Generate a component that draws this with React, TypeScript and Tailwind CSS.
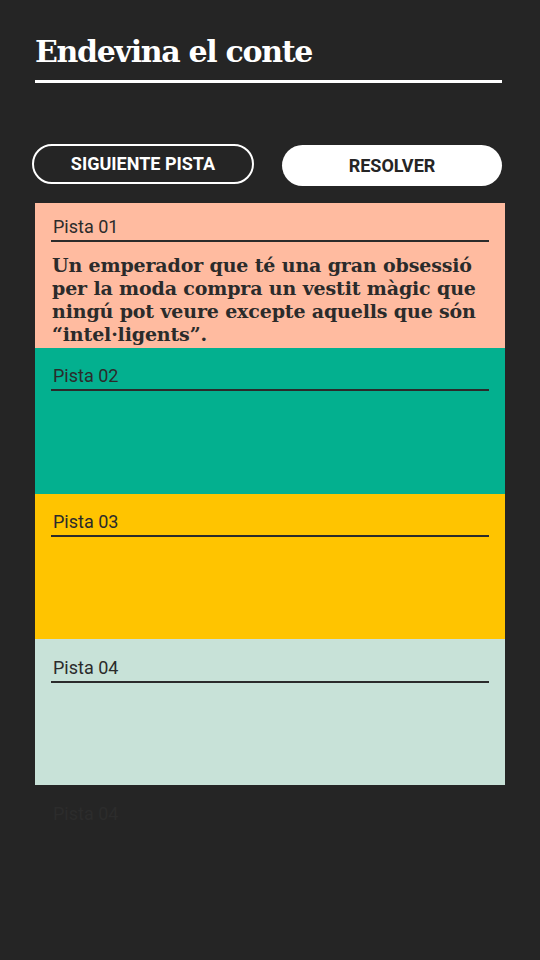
import React from "react";

const slab = { fontFamily: '"DejaVu Serif", "Liberation Serif", serif' };
const roboto = { fontFamily: 'Roboto, "Liberation Sans", sans-serif' };

function Card({
  bg,
  label,
  top,
  children,
}: {
  bg: string;
  label: string;
  top: string;
  children?: React.ReactNode;
}) {
  return (
    <div className={`h-[145.5px] overflow-hidden px-[16px] ${bg} ${top}`}>
      <div
        className="text-[18px] leading-[21px] text-[#2b2b2b] px-[2px] pb-[2.5px] border-b-2 border-[#2b2b2b]"
        style={roboto}
      >
        {label}
      </div>
      {children}
    </div>
  );
}

export default function App() {
  return (
    <div className="min-h-[960px] w-[540px] bg-[#252525]">
      <div className="px-[35px] pt-[32px]">
        <h1
          className="text-[30px] leading-[40px] font-bold text-white tracking-[-1.3px]"
          style={slab}
        >
          Endevina el conte
        </h1>
        <div className="mt-[7.5px] h-[3px] w-[467px] bg-white" />
      </div>

      <div className="flex items-start gap-[28px] pl-[32px] pr-[38px] mt-[61px]">
        <button
          className="w-[222px] h-[40.5px] rounded-full border-2 border-white text-white text-[18px] font-bold"
          style={roboto}
        >
          SIGUIENTE PISTA
        </button>
        <button
          className="mt-[1px] w-[220px] h-[41.5px] rounded-full bg-white text-[#252525] text-[18px] font-bold"
          style={roboto}
        >
          RESOLVER
        </button>
      </div>

      <div className="ml-[35px] w-[470px] mt-[16.5px] flex flex-col">
        <Card bg="bg-[#ffbba0]" label="Pista 01" top="pt-[13.5px]">
          <p
            className="mt-[12.5px] px-[1px] text-[19px] leading-[23px] font-bold text-[#2b2b2b] tracking-[-0.15px]"
            style={slab}
          >
            Un emperador que té una gran obsessió per la moda compra un vestit
            màgic que ningú pot veure excepte aquells que són “intel·ligents”.
          </p>
        </Card>
        <Card bg="bg-[#03b08f]" label="Pista 02" top="pt-[17px]" />
        <Card bg="bg-[#ffc400]" label="Pista 03" top="pt-[17.5px]" />
        <Card bg="bg-[#c8e2d8]" label="Pista 04" top="pt-[18px]" />
      </div>

      <div
        className="ml-[53px] mt-[18px] text-[18px] leading-[21px] text-[#2c2c2c]"
        style={roboto}
      >
        Pista 04
      </div>
    </div>
  );
}
